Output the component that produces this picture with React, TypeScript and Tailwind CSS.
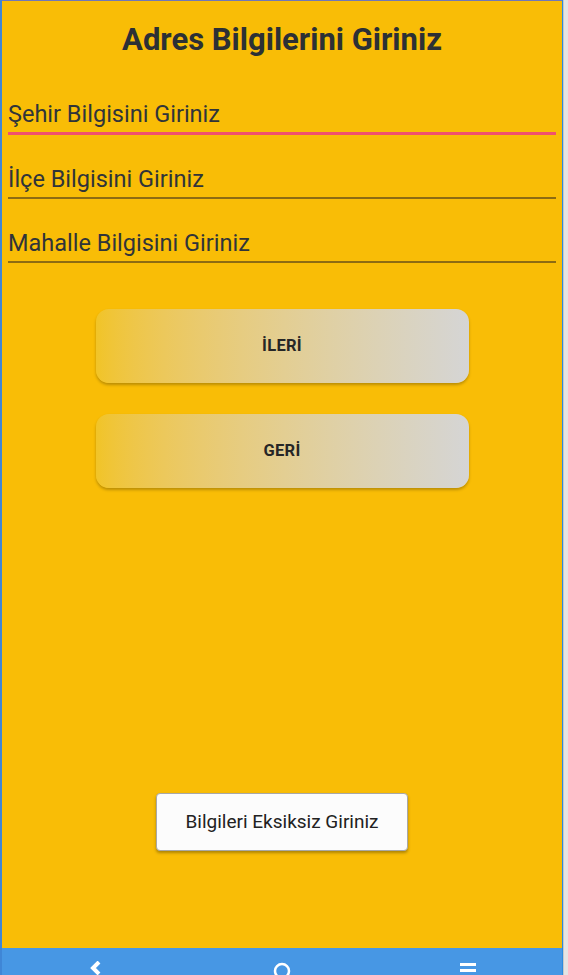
import React from 'react';

// Address entry form screen (emulator capture)
const FIELDS = [
  { label: 'Şehir Bilgisini Giriniz', focused: true },
  { label: 'İlçe Bilgisini Giriniz', focused: false },
  { label: 'Mahalle Bilgisini Giriniz', focused: false },
];

const GradientButton: React.FC<{ label: string }> = ({ label }) => (
  <button className="w-[373px] h-[74px] rounded-[13px] bg-gradient-to-r from-[#f1c427] to-[#d5d5d5] shadow-[0_2px_3px_rgba(0,0,0,0.25)] text-[16.5px] font-bold text-[#262626] tracking-[0.3px]">
    {label}
  </button>
);

export default function App() {
  return (
    <div
      className="w-[568px] h-[975px] flex overflow-hidden bg-[#dcdcdc]"
      style={{ fontFamily: 'Roboto, "Noto Sans", sans-serif' }}
    >
      <div className="w-[2px] bg-[#3f86d6]" />
      <div className="w-[560px] flex flex-col bg-[#f9bd06] border-t border-[#7078b8]">
        <h1 className="text-center text-[31px] font-bold text-[#2c3035] pt-[21px] leading-[36px]">
          Adres Bilgilerini Giriniz
        </h1>

        <div className="flex flex-col px-[6px] mt-[12px]">
          {FIELDS.map((f) => (
            <div
              key={f.label}
              className={`h-[64px] flex items-end pb-[4px] ${
                f.focused ? 'border-b-[3px] border-[#f0506e] h-[65px]' : 'border-b-2 border-[#8d6b12]'
              }`}
            >
              <span className="text-[23.5px] text-[#30343a] leading-[28px]">{f.label}</span>
            </div>
          ))}
        </div>

        <div className="flex flex-col items-center gap-[31px] mt-[46px]">
          <GradientButton label="İLERİ" />
          <GradientButton label="GERİ" />
        </div>

        <div className="flex-1" />

        <div className="flex justify-center mb-[97px]">
          <button className="w-[252px] h-[58px] bg-[#fcfcfc] rounded-[4px] border border-[#a8a8a8] shadow-[0_2px_3px_rgba(0,0,0,0.3)] text-[19px] text-[#222]">
            Bilgileri Eksiksiz Giriniz
          </button>
        </div>

        <div className="h-[27px] bg-[#4797e4] flex items-start pl-[84px] gap-[166px] pt-[13px]">
          <svg width="20" height="14" viewBox="0 0 20 14">
            <path d="M13 1 L7 7 L13 13" stroke="white" strokeWidth="4" fill="none" />
          </svg>
          <svg width="20" height="14" viewBox="0 0 20 14">
            <circle cx="10" cy="10" r="7" stroke="white" strokeWidth="2.5" fill="none" />
          </svg>
          <svg width="20" height="14" viewBox="0 0 20 14">
            <rect x="2" y="2" width="16" height="3" fill="white" />
            <rect x="2" y="8" width="16" height="3" fill="white" />
          </svg>
        </div>
      </div>
      <div className="w-[1px] bg-[#2a8be0]" />
      <div className="flex-1 bg-[#e4e4e4] border-l border-[#c8c8c8]" />
    </div>
  );
}
